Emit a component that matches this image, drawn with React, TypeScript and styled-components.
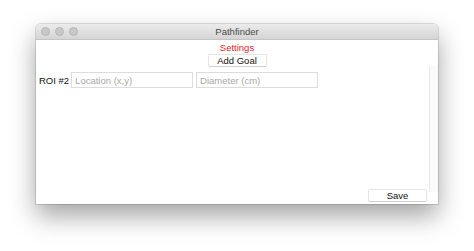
import styled, { createGlobalStyle } from "styled-components";

const GlobalStyle = createGlobalStyle`
  html, body {
    margin: 0;
    padding: 0;
    background: #ffffff;
  }
  body {
    font-family: "Liberation Sans", Arial, sans-serif;
  }
`;

const Page = styled.div`
  width: 474px;
  height: 251px;
  padding: 24px 0 0 36px;
  box-sizing: border-box;
`;

const Window = styled.div`
  display: flex;
  flex-direction: column;
  width: 402px;
  height: 180px;
  border-radius: 5px 5px 0 0;
  background: #ffffff;
  box-shadow: 0 12px 26px rgba(0, 0, 0, 0.36), 0 0 0 1px rgba(0, 0, 0, 0.12);
  overflow: hidden;
`;

const TitleBar = styled.div`
  position: relative;
  display: flex;
  align-items: center;
  justify-content: center;
  height: 15px;
  background: linear-gradient(#ebebeb, #d5d5d5);
  border-bottom: 1px solid #c4c4c4;
`;

const Lights = styled.div`
  position: absolute;
  left: 5px;
  top: 3px;
  display: flex;
  gap: 5px;
`;

const Light = styled.span`
  width: 9px;
  height: 9px;
  border-radius: 50%;
  background: #c8c8c8;
  border: 0.5px solid #b6b6b6;
  box-sizing: border-box;
`;

const Title = styled.span`
  font-size: 9.5px;
  color: #4a4a4a;
`;

const Body = styled.div`
  position: relative;
  flex: 1;
  display: flex;
  flex-direction: column;
  align-items: center;
  padding-top: 1px;
`;

const Heading = styled.div`
  font-size: 9.5px;
  line-height: 13px;
  color: #e5232b;
`;

const Button = styled.div<{ $width: number }>`
  display: flex;
  align-items: center;
  justify-content: center;
  width: ${(p) => p.$width}px;
  height: 13px;
  box-sizing: border-box;
  background: #ffffff;
  border: 1px solid #e4e4e4;
  border-bottom-color: #d0d0d0;
  border-radius: 2px;
  font-size: 9.5px;
  color: #111111;
`;

const Row = styled.div`
  align-self: stretch;
  display: flex;
  align-items: center;
  gap: 3px;
  margin-top: 5px;
  padding-left: 3px;
`;

const Label = styled.span`
  font-size: 9.5px;
  color: #111111;
  margin-right: -1px;
`;

const Field = styled.div`
  display: flex;
  align-items: center;
  width: 122px;
  height: 16px;
  box-sizing: border-box;
  padding-left: 3px;
  border: 1px solid #dcdcdc;
  font-size: 9.5px;
  color: #a9a9a9;
`;

const Spacer = styled.div`
  flex: 1;
`;

const Footer = styled.div`
  align-self: stretch;
  display: flex;
  justify-content: flex-end;
  padding-right: 11px;
  margin-bottom: 2px;
`;

const Track = styled.div`
  position: absolute;
  right: 0;
  top: 26px;
  bottom: 12px;
  width: 8px;
  border-left: 1px solid #e8e8e8;
  background: #fafafa;
`;

export default function App() {
  return (
    <>
      <GlobalStyle />
      <Page>
        <Window>
          <TitleBar>
            <Lights>
              <Light />
              <Light />
              <Light />
            </Lights>
            <Title>Pathfinder</Title>
          </TitleBar>
          <Body>
            <Track />
            <Heading>Settings</Heading>
            <Button $width={59}>Add Goal</Button>
            <Row>
              <Label>ROI #2</Label>
              <Field>Location (x,y)</Field>
              <Field>Diameter (cm)</Field>
            </Row>
            <Spacer />
            <Footer>
              <Button $width={59}>Save</Button>
            </Footer>
          </Body>
        </Window>
      </Page>
    </>
  );
}
